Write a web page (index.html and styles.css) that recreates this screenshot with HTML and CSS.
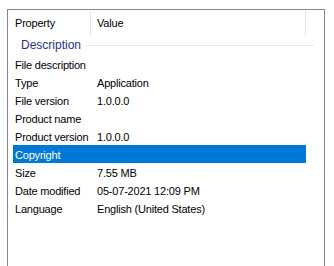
FILE: index.html
```html
<!DOCTYPE html>
<html lang="en">
<head>
    <meta charset="UTF-8">
    <title>Details</title>
    <link rel="stylesheet" href="styles.css">
</head>
<body>
    <div class="panel">
        <div class="list-header">
            <div class="col-head col-prop">Property</div>
            <div class="col-head col-value">Value</div>
        </div>
        <div class="group">
            <span class="group-title">Description</span>
            <span class="group-line"></span>
        </div>
        <div class="row"><span>File description</span><span></span></div>
        <div class="row"><span>Type</span><span>Application</span></div>
        <div class="row"><span>File version</span><span>1.0.0.0</span></div>
        <div class="row"><span>Product name</span><span></span></div>
        <div class="row"><span>Product version</span><span>1.0.0.0</span></div>
        <div class="row selected"><span>Copyright</span><span></span></div>
        <div class="row"><span>Size</span><span>7.55 MB</span></div>
        <div class="row"><span>Date modified</span><span>05-07-2021 12:09 PM</span></div>
        <div class="row"><span>Language</span><span>English (United States)</span></div>
    </div>
</body>
</html>
```

FILE: styles.css
```css
* {
    margin: 0;
    padding: 0;
    box-sizing: border-box;
}
html, body {
    height: 100%;
    overflow: hidden;
}
body {
    font-family: 'Liberation Sans', Arial, sans-serif;
    font-size: 11px;
    letter-spacing: -0.2px;
    background: #fff;
    color: #000;
}
.panel {
    margin: 9px 0 0 7px;
    width: 318px;
    height: 258px;
    border: 1px solid #828790;
    background: #fff;
}
.list-header {
    display: flex;
    height: 25px;
}
.col-head {
    line-height: 24px;
    margin-top: 1px;
}
.col-prop {
    width: 83px;
    padding-left: 7px;
    border-right: 1px solid #e5e5e5;
}
.col-value {
    width: 215px;
    padding-left: 6px;
    border-right: 1px solid #e5e5e5;
}
.group {
    display: flex;
    align-items: center;
    height: 20px;
    padding-left: 13px;
    padding-right: 10px;
    gap: 4px;
}
.group-title {
    color: #1e3287;
    font-size: 12px;
    letter-spacing: 0;
}
.group-line {
    flex: 1;
    height: 1px;
    background: #e2e8f4;
}
.row {
    display: grid;
    grid-template-columns: 82px 1fr;
    width: 293px;
    height: 18px;
    line-height: 18px;
    margin-left: 5px;
    padding-left: 2px;
    padding-top: 1px;
}
.selected {
    background: #0078d7;
    color: #fff;
}
```
